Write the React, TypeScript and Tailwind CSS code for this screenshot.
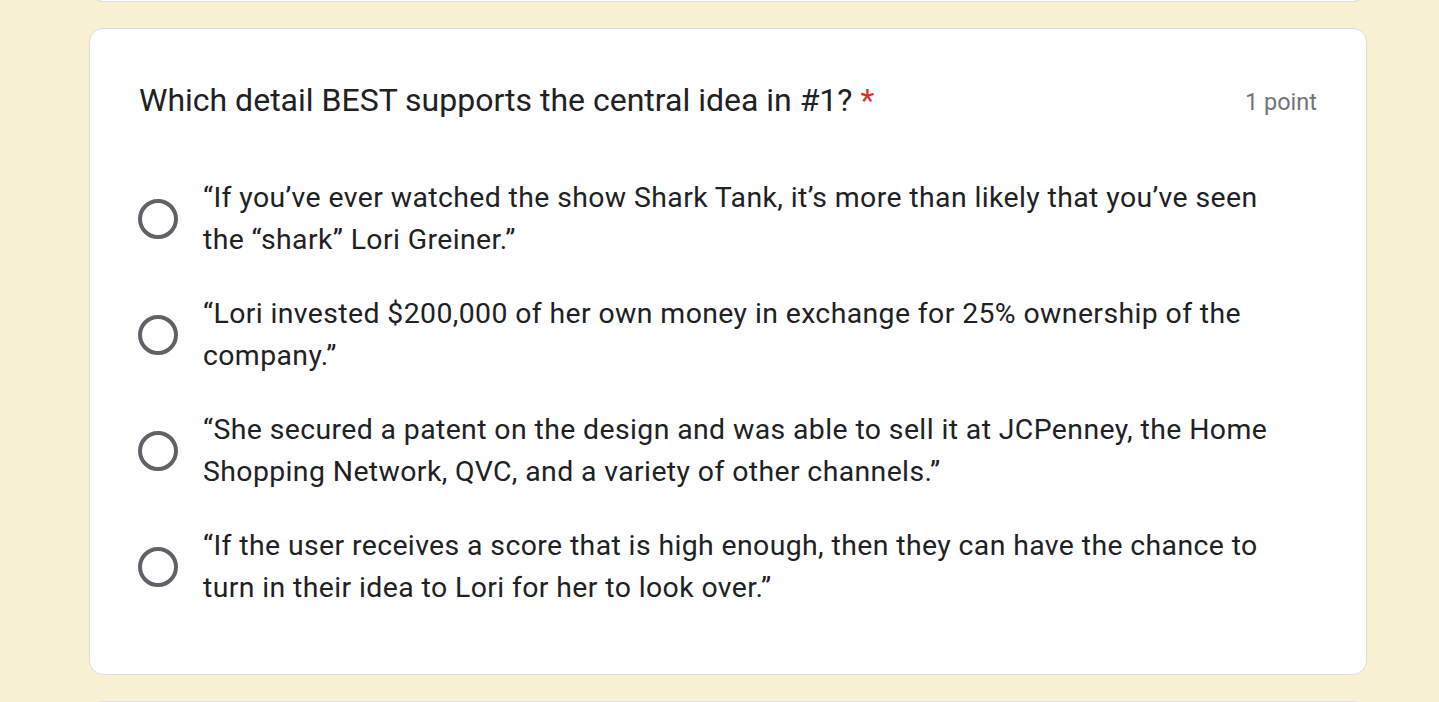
import React from "react";

const options = [
  "“If you’ve ever watched the show Shark Tank, it’s more than likely that you’ve seen the “shark” Lori Greiner.”",
  "“Lori invested $200,000 of her own money in exchange for 25% ownership of the company.”",
  "“She secured a patent on the design and was able to sell it at JCPenney, the Home Shopping Network, QVC, and a variety of other channels.”",
  "“If the user receives a score that is high enough, then they can have the chance to turn in their idea to Lori for her to look over.”",
];

export default function App() {
  return (
    <div
      className="w-[1439px] h-[702px] overflow-hidden bg-[#f9f1d4]"
      style={{ fontFamily: "Roboto, 'Liberation Sans', sans-serif" }}
    >
      <div className="ml-[89px] w-[1278px] flex flex-col gap-[26px] -mt-[198px]">
        <div className="h-[200px] bg-white border-[1.5px] border-[#dadce0] rounded-[14px]" />
        <div className="bg-white border-[1.5px] border-[#dadce0] rounded-[14px] pt-[51px] pb-[49px] pl-[49px] pr-[49px]">
          <div className="flex items-start justify-between">
            <div className="text-[32px] leading-[40px] text-[#202124]">
              Which detail BEST supports the central idea in #1?
              <span className="text-[#d93025] ml-[8px]">*</span>
            </div>
            <div className="text-[23.5px] leading-[40px] text-[#70757a] mt-[2px]">1 point</div>
          </div>
          <div className="mt-[39px] flex flex-col">
            {options.map((o, i) => (
              <div key={i} className="flex items-center py-[16px]">
                <div className="w-[40px] h-[40px] rounded-full border-[4px] border-[#5f6368] shrink-0 -ml-[1px]" />
                <div className="ml-[25px] w-[1090px] text-[28.4px] leading-[42px] tracking-[0.4px] text-[#202124]">
                  {o}
                </div>
              </div>
            ))}
          </div>
        </div>
        <div className="h-[200px] bg-white border-[1.5px] border-[#dadce0] rounded-[14px]" />
      </div>
    </div>
  );
}
